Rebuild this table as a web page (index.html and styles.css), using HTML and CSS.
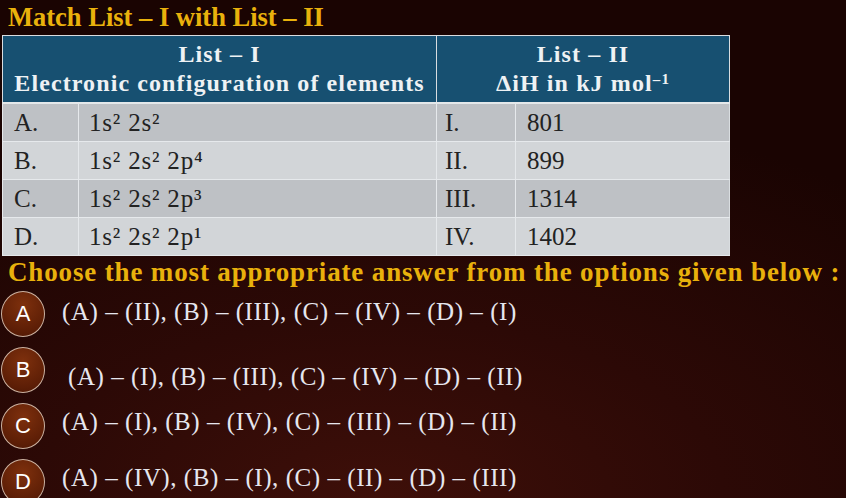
FILE: index.html
```html
<!DOCTYPE html>
<html>
<head>
<meta charset="utf-8">
<link rel="stylesheet" href="styles.css">
</head>
<body>
<div class="slide">
  <div class="title">Match List – I with List – II</div>
  <table class="match">
    <colgroup>
      <col class="c1"><col class="c2"><col class="c3"><col class="c4">
    </colgroup>
    <thead>
      <tr>
        <th colspan="2">List – I<br>Electronic configuration of elements</th>
        <th colspan="2">List – II<br>ΔiH in kJ mol<sup>–1</sup></th>
      </tr>
    </thead>
    <tbody>
      <tr class="dark"><td>A.</td><td>1s² 2s²</td><td>I.</td><td>801</td></tr>
      <tr class="light"><td>B.</td><td>1s² 2s² 2p⁴</td><td>II.</td><td>899</td></tr>
      <tr class="dark"><td>C.</td><td>1s² 2s² 2p³</td><td>III.</td><td>1314</td></tr>
      <tr class="light"><td>D.</td><td>1s² 2s² 2p¹</td><td>IV.</td><td>1402</td></tr>
    </tbody>
  </table>
  <div class="question">Choose the most appropriate answer from the options given below :</div>
  <div class="options">
    <div class="opt opt-a"><span class="badge">A</span><span class="otext">(A) – (II), (B) – (III), (C) – (IV) – (D) – (I)</span></div>
    <div class="opt opt-b"><span class="badge">B</span><span class="otext">(A) – (I), (B) – (III), (C) – (IV) – (D) – (II)</span></div>
    <div class="opt opt-c"><span class="badge">C</span><span class="otext">(A) – (I), (B) – (IV), (C) – (III) – (D) – (II)</span></div>
    <div class="opt opt-d"><span class="badge">D</span><span class="otext">(A) – (IV), (B) – (I), (C) – (II) – (D) – (III)</span></div>
  </div>
</div>
</body>
</html>
```
FILE: styles.css
```css
html, body {
  margin: 0;
  padding: 0;
}
body {
  width: 846px;
  height: 498px;
  overflow: hidden;
  background: radial-gradient(ellipse 90% 80% at 45% 100%, #3e0f09 0%, #2c0906 45%, #1a0402 100%);
  font-family: "Liberation Serif", "DejaVu Serif", serif;
}
.slide {
  display: flex;
  flex-direction: column;
}
.title {
  height: 35px;
  line-height: 35px;
  padding-left: 8px;
  color: #e9b10c;
  font-weight: bold;
  font-size: 26.5px;
}
.match {
  margin-left: 2px;
  width: 727px;
  border-collapse: collapse;
  table-layout: fixed;
  border: 1.5px solid #d9dde0;
}
.c1 { width: 76px; }
.c2 { width: 358px; }
.c3 { width: 79px; }
.c4 { width: 214px; }
.match th {
  background: #175071;
  color: #eef2f4;
  font-weight: bold;
  font-size: 24px;
  letter-spacing: 1.1px;
  line-height: 29px;
  height: 66px;
  padding: 0;
  border-left: 1.5px solid #d9dde0;
  border-bottom: 2px solid #e4e8ea;
  text-align: center;
}
.match th sup {
  font-size: 15px;
  line-height: 0;
  vertical-align: 7px;
}
.match td {
  height: 37px;
  padding: 0 0 0 11px;
  font-size: 25px;
  color: #222222;
  border-left: 1.5px solid #e6e9ec;
  border-bottom: 1px solid #e6e9ec;
}
.match td:nth-child(2) { padding-left: 10px; letter-spacing: 0.8px; }
.match td:nth-child(3) { padding-left: 8px; }
.dark td { background: #bec1c5; }
.light td { background: #d2d5d8; }
.question {
  height: 30px;
  line-height: 33px;
  padding-left: 8px;
  color: #e9b10c;
  font-weight: bold;
  font-size: 27px;
  letter-spacing: 0.85px;
  white-space: nowrap;
}
.options {
  display: flex;
  flex-direction: column;
}
.opt {
  height: 56px;
  display: flex;
  align-items: center;
  gap: 17px;
  padding-left: 1px;
}
.badge {
  flex: none;
  width: 42px;
  height: 44px;
  border-radius: 50%;
  border: 1.5px solid #cdb3a2;
  background: radial-gradient(circle at 50% 30%, #7e300d 0%, #5d1e06 70%, #4a1604 100%);
  color: #ffffff;
  font-family: "Liberation Sans", "DejaVu Sans", sans-serif;
  font-size: 22px;
  display: flex;
  align-items: center;
  justify-content: center;
}
.otext {
  color: #e6e6ee;
  font-size: 25px;
  letter-spacing: 0.55px;
  white-space: nowrap;
}
.opt-a .otext { margin-top: -4px; }
.opt-b .otext { margin-left: 6px; margin-top: 13px; }
.opt-c .otext { margin-top: -8px; }
.opt-d .otext { margin-top: -8px; }
```
